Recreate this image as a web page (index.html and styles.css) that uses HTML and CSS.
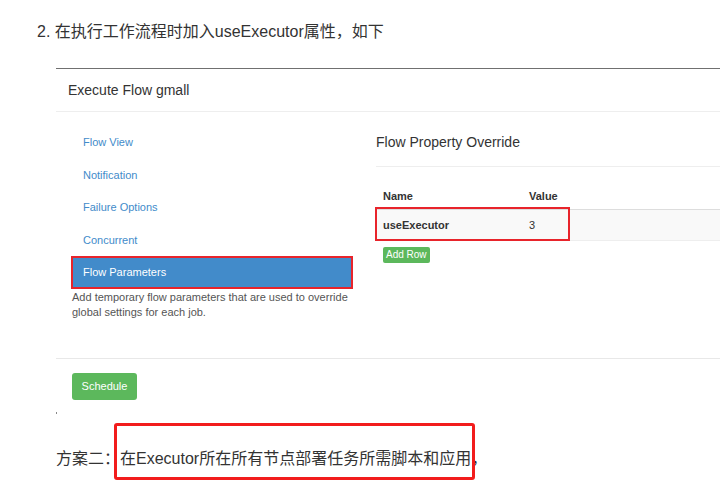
FILE: index.html
```html
<!DOCTYPE html>
<html lang="zh-CN">
<head>
<meta charset="utf-8">
<title>Execute Flow</title>
<link rel="stylesheet" href="styles.css">
</head>
<body>
<p class="step">2. 在执行工作流程时加入useExecutor属性，如下</p>
<div class="shot">
  <div class="modal-header">Execute Flow gmall</div>
  <div class="modal-body">
    <div class="side">
      <ul class="nav">
        <li><a>Flow View</a></li>
        <li><a>Notification</a></li>
        <li><a>Failure Options</a></li>
        <li><a>Concurrent</a></li>
        <li class="active"><a>Flow Parameters</a></li>
      </ul>
      <p class="help">Add temporary flow parameters that are used to override global settings for each job.</p>
    </div>
    <div class="main">
      <h4 class="panel-title">Flow Property Override</h4>
      <div class="table-wrap">
        <table class="props">
          <thead>
            <tr><th class="c-name">Name</th><th>Value</th></tr>
          </thead>
          <tbody>
            <tr><td class="c-name key">useExecutor</td><td>3</td></tr>
          </tbody>
        </table>
        <div class="mark"></div>
      </div>
      <button class="btn btn-add">Add Row</button>
    </div>
  </div>
  <div class="modal-footer"><button class="btn btn-schedule">Schedule</button></div>
</div>
<div class="dot"></div>
<p class="plan">方案二：在Executor所在所有节点部署任务所需脚本和应用，</p>
</body>
</html>
```
FILE: styles.css
```css
html {
  background: #fff;
}
body {
  margin: 0;
  width: 720px;
  min-height: 495px;
  font-family: "Liberation Sans", "Noto Sans CJK SC", sans-serif;
  color: #333;
}
.step {
  margin: 0;
  padding: 20px 0 0 37px;
  font-size: 16px;
  line-height: 24px;
  color: #333;
}
.shot {
  margin: 24px 0 0 56px;
  width: 664px;
  border-top: 1px solid #707070;
  background: #fff;
}
.modal-header {
  padding: 10px 12px;
  font-size: 14px;
  line-height: 22px;
  color: #333;
  border-bottom: 1px solid #eee;
}
.modal-body {
  display: flex;
  height: 246px;
  box-sizing: border-box;
}
.side {
  margin-left: 16px;
  width: 280px;
  padding-top: 15px;
}
.nav {
  list-style: none;
  margin: 0;
  padding: 0;
}
.nav li + li {
  margin-top: 2px;
}
.nav a {
  display: block;
  padding: 9px 11px;
  font-size: 11px;
  line-height: 12.5px;
  color: #428bca;
}
.nav .active a {
  background: #428bca;
  color: #fff;
  outline: 2px solid #e8242b;
  outline-offset: -1px;
}
.help {
  margin: 2px 0 0;
  font-size: 11px;
  line-height: 15px;
  color: #555;
}
.main {
  margin-left: 24px;
  flex: 1;
  padding-top: 20px;
}
.panel-title {
  margin: 0;
  padding-bottom: 14px;
  font-size: 14px;
  line-height: 20px;
  font-weight: normal;
  color: #333;
  border-bottom: 1px solid #eee;
}
.table-wrap {
  position: relative;
  margin-top: 16px;
}
.props {
  width: 100%;
  border-collapse: collapse;
  font-size: 11px;
}
.props th {
  text-align: left;
  font-weight: bold;
  padding: 7px;
  line-height: 12px;
  border-bottom: 1px solid #ddd;
}
.props td {
  padding: 9px 7px;
  line-height: 12px;
  background: #f9f9f9;
  border-bottom: 1px solid #eee;
}
.props .c-name {
  width: 132px;
}
.props .key {
  font-weight: bold;
}
.mark {
  position: absolute;
  left: -1px;
  top: 24px;
  width: 191px;
  height: 30px;
  border: 2px solid #e8242b;
}
.btn {
  border: 0;
  background: #5cb85c;
  color: #fff;
  font-family: "Liberation Sans", sans-serif;
  cursor: pointer;
}
.btn-add {
  display: block;
  margin: 6px 0 0 7px;
  height: 16px;
  padding: 0 3px;
  font-size: 10px;
  line-height: 16px;
  border-radius: 2px;
}
.modal-footer {
  border-top: 1px solid #e8e8e8;
  padding: 14px 16px 12px;
}
.btn-schedule {
  display: block;
  height: 27px;
  width: 65px;
  padding: 0;
  font-size: 11px;
  line-height: 27px;
  border-radius: 3px;
}
.dot {
  margin-left: 56px;
  width: 1px;
  height: 2px;
  background: #888;
}
.plan {
  position: relative;
  margin: 33px 0 0 56px;
  font-size: 16px;
  line-height: 24px;
  color: #333;
  white-space: nowrap;
}
.plan::after {
  content: "";
  position: absolute;
  left: 58px;
  top: -24px;
  width: 355px;
  height: 51px;
  border: 3px solid #f21c1c;
  border-radius: 3px;
}
```
